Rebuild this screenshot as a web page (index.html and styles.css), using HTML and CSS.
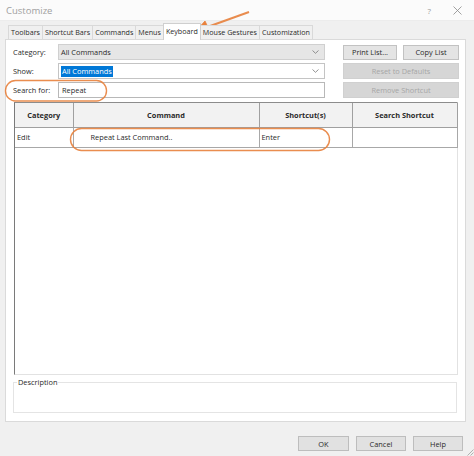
FILE: index.html
```html
<!DOCTYPE html>
<html>
<head>
<meta charset="utf-8">
<link rel="stylesheet" href="styles.css">
</head>
<body>
<div class="win">
  <div class="titlebar">
    <span class="title">Customize</span>
    <span class="ctrls">
      <span class="qm">?</span>
      <svg class="close" width="9" height="9" viewBox="0 0 9 9"><path d="M0.5 0.5L8.5 8.5M8.5 0.5L0.5 8.5" stroke="#8a8a8a" stroke-width="0.8" fill="none"/></svg>
    </span>
  </div>
  <div class="tabs">
    <div class="tab">Toolbars</div>
    <div class="tab">Shortcut Bars</div>
    <div class="tab">Commands</div>
    <div class="tab">Menus</div>
    <div class="tab active">Keyboard</div>
    <div class="tab">Mouse Gestures</div>
    <div class="tab">Customization</div>
  </div>
  <div class="panel">
    <div class="form">
      <div class="lbl">Category:</div>
      <div class="combo gray"><span>All Commands</span><svg class="chev" width="7" height="4" viewBox="0 0 7 4"><path d="M0.5 0.5L3.5 3.3L6.5 0.5" stroke="#777" stroke-width="0.8" fill="none"/></svg></div>
      <div class="gapcol"></div>
      <div class="pair"><div class="btn w54">Print List...</div><div class="btn w56">Copy List</div></div>

      <div class="lbl">Show:</div>
      <div class="combo"><span class="sel">All Commands</span><svg class="chev" width="7" height="4" viewBox="0 0 7 4"><path d="M0.5 0.5L3.5 3.3L6.5 0.5" stroke="#777" stroke-width="0.8" fill="none"/></svg></div>
      <div class="gapcol"></div>
      <div class="btn dis">Reset to Defaults</div>

      <div class="lbl">Search for:</div>
      <div class="input">Repeat</div>
      <div class="gapcol"></div>
      <div class="btn dis">Remove Shortcut</div>
    </div>
    <div class="grid">
      <table>
        <colgroup><col class="c1"><col class="c2"><col class="c3"><col class="c4"></colgroup>
        <thead>
          <tr><th>Category</th><th>Command</th><th>Shortcut(s)</th><th>Search Shortcut</th></tr>
        </thead>
        <tbody>
          <tr><td>Edit</td><td class="cmd">Repeat Last Command..</td><td>Enter</td><td></td></tr>
        </tbody>
      </table>
    </div>
    <div class="desc"><span class="desc-lbl">Description</span></div>
  </div>
  <div class="footer">
    <div class="btn fbtn w51">OK</div>
    <div class="btn fbtn">Cancel</div>
    <div class="btn fbtn">Help</div>
  </div>
</div>
<svg class="grip" width="8" height="8" viewBox="0 0 8 8"><path d="M7.5 1.5L1.5 7.5M7.5 4.5L4.5 7.5" stroke="#a0a0a0" stroke-width="0.8"/></svg>
<svg class="annot" width="474" height="456" viewBox="0 0 474 456">
  <g fill="none" stroke="#e8813c" stroke-width="1.4" opacity="0.9">
    <rect x="5.5" y="80.5" width="101" height="20.5" rx="10" ry="10"/>
    <rect x="70.5" y="128.5" width="259" height="22" rx="11" ry="11"/>
    <line x1="249" y1="12" x2="206" y2="27.5" stroke-width="2"/>
  </g>
  <polygon points="195.5,31.5 210.5,32.5 205,21" fill="#e8813c" stroke="#e8813c" stroke-width="0.8" stroke-linejoin="round"/>
</svg>
</body>
</html>
```
FILE: styles.css
```css
* { box-sizing: border-box; margin: 0; padding: 0; }
html, body { width: 474px; height: 456px; overflow: hidden; }
body {
  background: #f0f0f0;
  font-family: "Open Sans", "Noto Sans", sans-serif;
  font-size: 7.4px;
  color: #2a2a2a;
  position: relative;
}
.win { display: flex; flex-direction: column; height: 456px; }

.titlebar {
  height: 21px;
  background: #fbfbfb;
  border-bottom: 1px solid #ececec;
  display: flex;
  align-items: center;
  justify-content: space-between;
  padding: 0 12px 0 6px;
}
.title { font-size: 9.5px; color: #a0a0a0; }
.ctrls { display: flex; align-items: center; gap: 22px; }
.qm { font-size: 8px; color: #9a9a9a; }

.tabs {
  margin-top: 4px;
  padding-left: 8px;
  display: flex;
  align-items: flex-end;
  height: 14px;
  position: relative;
  z-index: 1;
  font-size: 7.15px;
}
.tab {
  height: 14px;
  line-height: 13px;
  padding: 0 2px;
  border: 1px solid #d9d9d9;
  border-bottom: none;
  margin-right: -1px;
  background: #f0f0f0;
  white-space: nowrap;
}
.tab.active {
  background: #fff;
  height: 17px;
  line-height: 15px;
  border-color: #cfcfcf;
  margin-bottom: -1px;
  position: relative;
  padding: 0 2px;
}

.panel {
  margin: 0 8px 0 5px;
  height: 383px;
  border: 1px solid #dadada;
  background: #fff;
  padding: 4px 7px 8px 7px;
  display: flex;
  flex-direction: column;
}

.form {
  display: grid;
  grid-template-columns: 45px 267px 18px 116px;
  grid-auto-rows: 16px;
  row-gap: 3px;
  align-items: center;
}
.lbl { white-space: nowrap; }
.combo, .input {
  height: 16px;
  border: 1px solid #c4c4c4;
  background: #fff;
  display: flex;
  align-items: center;
  justify-content: space-between;
  padding: 0 5px 0 2px;
}
.combo.gray { background: #e6e6e6; border-color: #d0d0d0; }
.sel { background: #0078d7; color: #fff; padding: 0 1px; line-height: 11px; }
.input { justify-content: flex-start; padding-left: 3px; border-color: #b8b8b8; }
.chev { flex: none; }

.pair { display: flex; gap: 6px; }
.btn {
  height: 15px;
  border: 1px solid #c2c2c2;
  background: #e4e4e4;
  display: flex;
  align-items: center;
  justify-content: center;
  white-space: nowrap;
  color: #2a2a2a;
}
.w54 { width: 54px; }
.w56 { width: 56px; }
.btn.dis { background: #d6d6d6; border-color: #d0d0d0; color: #a6a6a6; height: 16px; }

.grid {
  margin: 4px 0 0 1px;
  width: 444px;
  height: 273px;
  border-left: 1px solid #7a7a7a;
  border-top: 1px solid #8c8c8c;
  border-right: 1px solid #e2e2e2;
  border-bottom: 1px solid #e2e2e2;
}
table { border-collapse: collapse; table-layout: fixed; width: 442px; }
.c1 { width: 58px; }
.c2 { width: 186px; }
.c3 { width: 93px; }
.c4 { width: 105px; }
th {
  height: 24px;
  background: #f2f2f2;
  font-weight: 700;
  text-align: center;
  border-right: 1px solid #a0a0a0;
  border-bottom: 1px solid #a0a0a0;
}
td {
  height: 20px;
  border-right: 1px solid #a8a8a8;
  border-bottom: 1px solid #a8a8a8;
  padding-left: 2px;
  white-space: nowrap;
}
td.cmd { padding-left: 17px; }

.desc {
  margin-top: 7px;
  height: 31px;
  width: 444px;
  border: 1px solid #e4e4e4;
}
.desc-lbl {
  display: inline-block;
  margin: -6px 0 0 3px;
  background: #fff;
  padding: 0 1px;
  line-height: 10px;
  vertical-align: top;
}

.footer {
  flex: 1;
  display: flex;
  justify-content: flex-end;
  align-items: flex-start;
  padding: 14px 11px 0 0;
  gap: 7px;
}
.fbtn { width: 50px; height: 15px; background: #e1e1e1; border-color: #bdbdbd; }
.fbtn.w51 { width: 51px; }

.grip { position: absolute; right: 0; bottom: 0; }
.annot { position: absolute; left: 0; top: 0; pointer-events: none; }
```
